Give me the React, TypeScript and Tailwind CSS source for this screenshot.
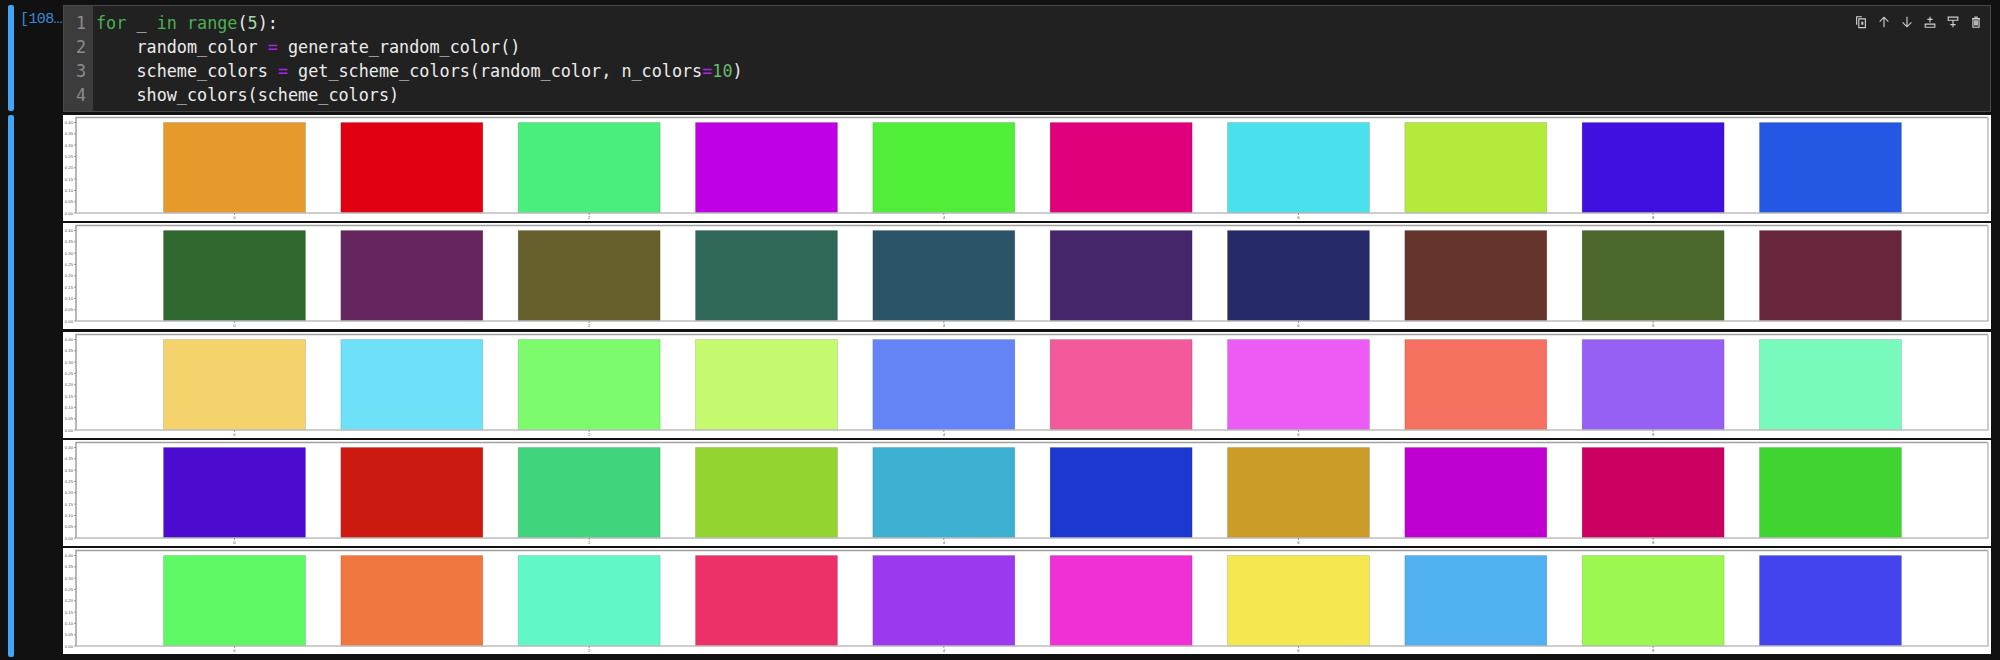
const ROWS = [
  ['#e59a2b', '#e00012', '#4aee7c', '#c000e4', '#50ee38', '#e0007c', '#4ae0ec', '#b4ea3c', '#4010e0', '#2458e4'],
  ['#2f682f', '#65265f', '#68602c', '#2f6858', '#2c5468', '#46266a', '#262a68', '#65342a', '#4d682c', '#68263c'],
  ['#f5d36c', '#6ee0f8', '#7cfc6c', '#c6fa6e', '#6484f6', '#f35a9c', '#ec5cf4', '#f5705f', '#9660f4', '#78fabc'],
  ['#4c0cd0', '#cc1a10', '#40d47c', '#94d430', '#3cb0d0', '#1c38d0', '#cc9c28', '#c000d0', '#cc0060', '#40d430'],
  ['#5ef864', '#f07840', '#60f8c8', '#ee3068', '#9c38ee', '#ee30d4', '#f4e84e', '#50b0f0', '#9cf850', '#4444ee'],
];

const TICKS = ['0.40', '0.35', '0.30', '0.25', '0.20', '0.15', '0.10', '0.05', '0.00'];

function SwatchChart({ colors }: { colors: string[] }) {
  return (
    <svg viewBox="0 0 1928 106" className="block w-full h-[106px] bg-white">
      {colors.map((c, i) => (
        <rect key={i} x={100.5 + i * 177.33} y={7.5} width={142} height={90.5} fill={c} stroke="#000" strokeOpacity={0.12} strokeWidth={1} />
      ))}
      <path d="M13 98V2.5H1925" fill="none" stroke="#a0a0a0" strokeWidth={1.5} />
      <path d="M1925 2.5V98H13" fill="none" stroke="#bdbdbd" strokeWidth={1.5} />
      {TICKS.map((t, i) => (
        <g key={t}>
          <line x1={11} x2={13} y1={7.5 + i * 11.32} y2={7.5 + i * 11.32} stroke="#777" strokeWidth={0.7} />
          <text x={10} y={9 + i * 11.32} textAnchor="end" fontSize={4.2} fill="#555" fontFamily="'Liberation Sans', sans-serif">
            {t}
          </text>
        </g>
      ))}
      {[0, 2, 4, 6, 8].map((n, i) => (
        <g key={n}>
          <line x1={171.5 + i * 354.66} x2={171.5 + i * 354.66} y1={98} y2={100} stroke="#777" strokeWidth={0.7} />
          <text x={171.5 + i * 354.66} y={104} textAnchor="middle" fontSize={4.2} fill="#555" fontFamily="'Liberation Sans', sans-serif">
            {n}
          </text>
        </g>
      ))}
    </svg>
  );
}

function ToolIcon({ d }: { d: string }) {
  return (
    <svg viewBox="0 0 16 16" className="w-[14px] h-[14px]" fill="none" stroke="#cfcfcf" strokeWidth={1.3}>
      <path d={d} />
    </svg>
  );
}

function Toolbar() {
  return (
    <div className="absolute top-[9px] right-[7px] flex gap-[9px]">
      <ToolIcon d="M3 11V2h6M5.5 4.5h7.5v10H5.5zM9 8.5h1v2H9z" />
      <ToolIcon d="M8 14V2.5M3 7.5l5-5 5 5" />
      <ToolIcon d="M8 2v11.5M3 8.5l5 5 5-5" />
      <ToolIcon d="M2.5 10.5h11v3.5h-11zM8 2v6.5M5 5h6" />
      <ToolIcon d="M2.5 2.5h11v3.5h-11zM8 6v8M5 11h6" />
      <ToolIcon d="M3.5 4h9M6 2.5h4M4.5 4.5h7v9.5h-7zM6.5 6v6M8 6v6M9.5 6v6" />
    </div>
  );
}

export default function App() {
  return (
    <div className="w-full h-[660px] bg-[#111111] pt-[5px] overflow-hidden">
      <div className="flex h-[107px]">
        <div className="w-[6px] ml-[8px] h-[106px] rounded-[2px] bg-[#42a5f5]" />
        <div className="w-[49px] pl-[6px] pt-[5px] text-[15px] leading-[20px] text-[#3f86d8] font-['Liberation_Mono',monospace] tracking-[-0.6px]">
          [108…
        </div>
        <div className="relative w-[1928px] flex border border-[#4a4a4a] bg-[#212121] text-[16.8px] leading-[24px] font-['DejaVu_Sans_Mono',monospace] text-[#ececec]">
          <div className="w-[29px] bg-[#3c3c3c] text-[#8c8c8c] text-right pr-[7px] pt-[5px]">
            <div>1</div>
            <div>2</div>
            <div>3</div>
            <div>4</div>
          </div>
          <pre className="pl-[3px] pt-[5px] font-['DejaVu_Sans_Mono',monospace]">
            <div>
              <span className="text-[#4caf50]">for</span> _ <span className="text-[#4caf50]">in</span> <span className="text-[#4caf50]">range</span>(<span className="text-[#a5d6a7]">5</span>):
            </div>
            <div>
              {'    '}random_color <span className="text-[#a626e8]">=</span> generate_random_color()
            </div>
            <div>
              {'    '}scheme_colors <span className="text-[#a626e8]">=</span> get_scheme_colors(random_color, n_colors<span className="text-[#a626e8]">=</span><span className="text-[#66bb6a]">10</span>)
            </div>
            <div>{'    '}show_colors(scheme_colors)</div>
          </pre>
          <Toolbar />
        </div>
      </div>
      <div className="flex mt-[3px]">
        <div className="w-[6px] ml-[8px] h-[542px] rounded-[2px] bg-[#42a5f5]" />
        <div className="w-[49px]" />
        <div className="w-[1928px] flex flex-col gap-[2.25px]">
          {ROWS.map((colors, i) => (
            <SwatchChart key={i} colors={colors} />
          ))}
        </div>
      </div>
    </div>
  );
}
